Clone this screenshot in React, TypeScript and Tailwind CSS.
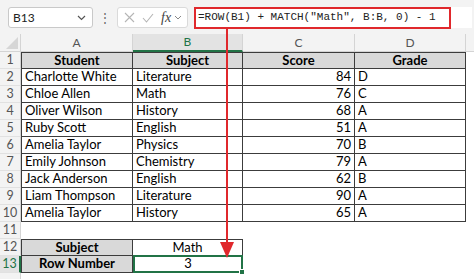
import React from "react";

const COLS = [112, 110, 112, 111];
const LETTERS = ["A", "B", "C", "D"];

type Cell = { t: string; align?: "l" | "c" | "r"; bold?: boolean; head?: boolean };

const data: [string, string, number, string][] = [
  ["Charlotte White", "Literature", 84, "D"],
  ["Chloe Allen", "Math", 76, "C"],
  ["Oliver Wilson", "History", 68, "A"],
  ["Ruby Scott", "English", 51, "A"],
  ["Amelia Taylor", "Physics", 70, "B"],
  ["Emily Johnson", "Chemistry", 79, "A"],
  ["Jack Anderson", "English", 62, "B"],
  ["Liam Thompson", "Literature", 90, "A"],
  ["Amelia Taylor", "History", 65, "A"],
];

const font = { fontFamily: "Lato, 'Open Sans', sans-serif" };

function RowHead({ n, sel }: { n: number; sel?: boolean }) {
  return (
    <div
      className={
        "w-[21px] shrink-0 h-full flex items-center justify-center text-[12.5px] border-b border-[#e1e1e1] " +
        (sel ? "text-[#217346] bg-[#e3e3e3] border-r-2 border-r-[#217346]" : "text-[#555] bg-[#f3f3f3] border-r border-r-[#d4d4d4]")
      }
    >
      {n}
    </div>
  );
}

function TCell({ w, c, first, top }: { w: number; c: Cell; first?: boolean; top?: boolean }) {
  return (
    <div
      style={{ width: w }}
      className={
        "shrink-0 h-full flex items-center px-[3px] border-r border-b border-[#3c3c3c] text-[13px] text-black overflow-hidden whitespace-nowrap " +
        (first ? "border-l " : "") +
        (top ? "border-t " : "") +
        (c.head ? "bg-[#d9d9d9] font-bold " : "bg-white ") +
        (c.align === "c" ? "justify-center " : c.align === "r" ? "justify-end " : "justify-start ")
      }
    >
      {c.t}
    </div>
  );
}

function Empty({ w }: { w: number }) {
  return <div style={{ width: w }} className="shrink-0 h-full bg-white" />;
}

export default function App() {
  return (
    <div className="relative w-[474px] h-[280px] overflow-hidden bg-white" style={font}>
      {/* formula bar */}
      <div className="h-[34px] bg-[#f3f3f3] flex items-start pt-[7px] pl-[8px] gap-[6px]">
        <div className="w-[85px] h-[21px] bg-white border border-[#c9c9c9] rounded-[3px] flex items-center justify-between pl-[4px] pr-[6px] text-[12px] text-[#222]">
          <span>B13</span>
          <svg width="9" height="6" viewBox="0 0 9 6">
            <path d="M1 1 L4.5 4.5 L8 1" stroke="#555" strokeWidth="1.2" fill="none" />
          </svg>
        </div>
        <div className="w-[12px] h-[21px] flex items-center justify-center text-[#666] text-[12px]">⋮</div>
        <div className="w-[71px] h-[21px] bg-white border border-[#dadada] rounded-[3px] flex items-center pl-[6px] gap-[7px]">
          <svg width="11" height="11" viewBox="0 0 11 11">
            <path d="M1 1 L10 10 M10 1 L1 10" stroke="#b5b5b5" strokeWidth="1.1" />
          </svg>
          <svg width="12" height="10" viewBox="0 0 12 10">
            <path d="M1 5 L4.5 9 L11 1" stroke="#b5b5b5" strokeWidth="1.1" fill="none" />
          </svg>
          <span className="italic text-[14px] text-[#444] leading-none" style={{ fontFamily: "'Liberation Serif', serif" }}>
            fx
          </span>
          <svg width="8" height="5" viewBox="0 0 8 5" className="-ml-[4px]">
            <path d="M1 1 L4 4 L7 1" stroke="#888" strokeWidth="1" fill="none" />
          </svg>
        </div>
        <div className="flex-1 h-[21px] bg-white mr-[2px] flex items-center">
          <div
            className="w-[257px] h-[22px] border-2 border-[#e0282c] flex items-center pl-[2px] text-[11px] text-[#222] whitespace-nowrap"
            style={{ fontFamily: "'Liberation Mono', monospace" }}
          >
            =ROW(B1) + MATCH("Math", B:B, 0) - 1
          </div>
        </div>
      </div>

      {/* column header */}
      <div className="h-[18px] flex bg-[#f3f3f3]">
        <div className="w-[21px] shrink-0 h-full border-r border-b border-[#d4d4d4] relative">
          <svg width="12" height="12" viewBox="0 0 12 12" className="absolute right-[2px] bottom-[2px]">
            <path d="M12 0 L12 12 L0 12 Z" fill="#d6d6d6" />
          </svg>
        </div>
        {COLS.map((w, i) => (
          <div
            key={i}
            style={{ width: w }}
            className={
              "shrink-0 h-full flex items-center justify-center text-[12px] border-r border-[#d4d4d4] " +
              (i === 1 ? "text-[#217346] bg-[#e3e3e3] border-b-2 border-b-[#217346]" : "text-[#555] border-b")
            }
          >
            {LETTERS[i]}
          </div>
        ))}
        <div className="flex-1 h-full border-b border-[#d4d4d4]" />
      </div>

      {/* row 1 header */}
      <div className="h-[17px] flex">
        <RowHead n={1} />
        <TCell w={COLS[0]} first top c={{ t: "Student", head: true, align: "c" }} />
        <TCell w={COLS[1]} top c={{ t: "Subject", head: true, align: "c" }} />
        <TCell w={COLS[2]} top c={{ t: "Score", head: true, align: "c" }} />
        <TCell w={COLS[3]} top c={{ t: "Grade", head: true, align: "c" }} />
      </div>

      {data.map((r, i) => (
        <div key={i} className="h-[17px] flex">
          <RowHead n={i + 2} />
          <TCell w={COLS[0]} first c={{ t: r[0] }} />
          <TCell w={COLS[1]} c={{ t: r[1] }} />
          <TCell w={COLS[2]} c={{ t: String(r[2]), align: "r" }} />
          <TCell w={COLS[3]} c={{ t: r[3] }} />
        </div>
      ))}

      <div className="h-[17px] flex">
        <RowHead n={11} />
        <Empty w={COLS[0]} />
      </div>

      <div className="h-[17px] flex">
        <RowHead n={12} />
        <TCell w={COLS[0]} first top c={{ t: "Subject", head: true, align: "c" }} />
        <TCell w={COLS[1]} top c={{ t: "Math", align: "c" }} />
      </div>

      <div className="h-[17px] flex">
        <RowHead n={13} sel />
        <TCell w={COLS[0]} first c={{ t: "Row Number", head: true, align: "c" }} />
        <div
          style={{ width: COLS[1] }}
          className="relative shrink-0 flex items-center justify-center text-[13px] text-black border-2 border-[#217346] -mt-[1px] h-[18px]"
        >
          3
          <div className="absolute -right-[4px] -bottom-[4px] w-[6px] h-[6px] bg-[#217346] border border-white" />
        </div>
      </div>

      <div className="h-[6px] flex">
        <div className="w-[21px] bg-[#f3f3f3] border-r border-[#d4d4d4]" />
      </div>

      {/* red arrow annotation */}
      <svg className="absolute left-0 top-0 pointer-events-none" width="474" height="280">
        <line x1="227" y1="29" x2="227" y2="244" stroke="#e0282c" strokeWidth="2" />
        <path d="M220 242 L234 242 L227 258 Z" fill="#e0282c" />
      </svg>
    </div>
  );
}
